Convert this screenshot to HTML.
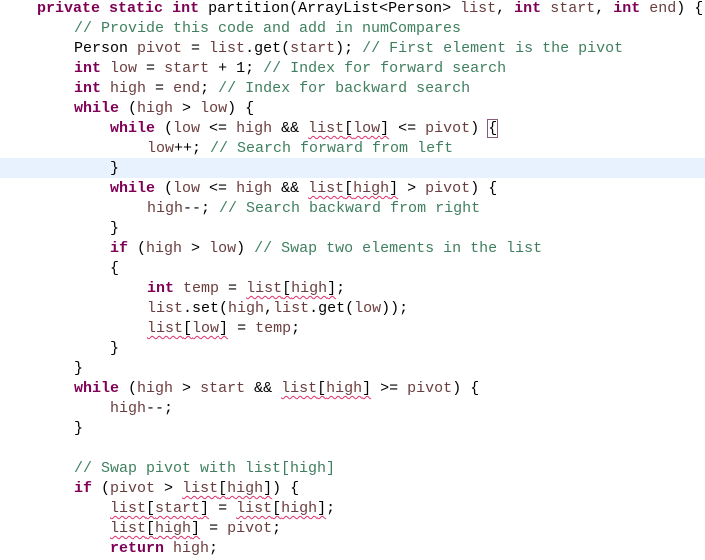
<!DOCTYPE html>
<html><head><style>
body{margin:0;width:705px;height:560px;background:#fff;overflow:hidden;position:relative;font-family:"Liberation Mono",monospace;font-size:15px;color:#000}
.l{position:absolute;white-space:pre;height:20px;line-height:20px}
.k{color:#7f0055;font-weight:bold}
.v{color:#6a3e3e}
.c{color:#3f7f5f}
.e{text-decoration:underline wavy #e0306a;text-decoration-thickness:1px;text-underline-offset:3px}
.hl{position:absolute;left:0;width:705px;top:158px;height:20px;background:#e8f2fe}
.b{outline:1px solid #8a5c7a}
</style></head><body>
<div class="hl"></div>
<div class="l" style="left:37px;top:-1px"><span class="k">private</span> <span class="k">static</span> <span class="k">int</span> partition(ArrayList&lt;Person&gt; <span class="v">list</span>, <span class="k">int</span> <span class="v">start</span>, <span class="k">int</span> <span class="v">end</span>) {</div>
<div class="l" style="left:74px;top:19px"><span class="c">// Provide this code and add in numCompares</span></div>
<div class="l" style="left:74px;top:39px">Person <span class="v">pivot</span> = <span class="v">list</span>.get(<span class="v">start</span>); <span class="c">// First element is the pivot</span></div>
<div class="l" style="left:74px;top:59px"><span class="k">int</span> <span class="v">low</span> = <span class="v">start</span> + 1; <span class="c">// Index for forward search</span></div>
<div class="l" style="left:74px;top:79px"><span class="k">int</span> <span class="v">high</span> = <span class="v">end</span>; <span class="c">// Index for backward search</span></div>
<div class="l" style="left:74px;top:99px"><span class="k">while</span> (<span class="v">high</span> &gt; <span class="v">low</span>) {</div>
<div class="l" style="left:110px;top:119px"><span class="k">while</span> (<span class="v">low</span> &lt;= <span class="v">high</span> &amp;&amp; <span class="e"><span class="v">list</span>[<span class="v">low</span>]</span> &lt;= <span class="v">pivot</span>) <span class="b">{</span></div>
<div class="l" style="left:147px;top:139px"><span class="v">low</span>++; <span class="c">// Search forward from left</span></div>
<div class="l" style="left:110px;top:159px">}</div>
<div class="l" style="left:110px;top:179px"><span class="k">while</span> (<span class="v">low</span> &lt;= <span class="v">high</span> &amp;&amp; <span class="e"><span class="v">list</span>[<span class="v">high</span>]</span> &gt; <span class="v">pivot</span>) {</div>
<div class="l" style="left:147px;top:199px"><span class="v">high</span>--; <span class="c">// Search backward from right</span></div>
<div class="l" style="left:110px;top:219px">}</div>
<div class="l" style="left:110px;top:239px"><span class="k">if</span> (<span class="v">high</span> &gt; <span class="v">low</span>) <span class="c">// Swap two elements in the list</span></div>
<div class="l" style="left:110px;top:259px">{</div>
<div class="l" style="left:147px;top:279px"><span class="k">int</span> <span class="v">temp</span> = <span class="e"><span class="v">list</span>[<span class="v">high</span>]</span>;</div>
<div class="l" style="left:147px;top:299px"><span class="v">list</span>.set(<span class="v">high</span>,<span class="v">list</span>.get(<span class="v">low</span>));</div>
<div class="l" style="left:147px;top:319px"><span class="e"><span class="v">list</span>[<span class="v">low</span>]</span> = <span class="v">temp</span>;</div>
<div class="l" style="left:110px;top:339px">}</div>
<div class="l" style="left:74px;top:359px">}</div>
<div class="l" style="left:74px;top:379px"><span class="k">while</span> (<span class="v">high</span> &gt; <span class="v">start</span> &amp;&amp; <span class="e"><span class="v">list</span>[<span class="v">high</span>]</span> &gt;= <span class="v">pivot</span>) {</div>
<div class="l" style="left:110px;top:399px"><span class="v">high</span>--;</div>
<div class="l" style="left:74px;top:419px">}</div>
<div class="l" style="left:74px;top:459px"><span class="c">// Swap pivot with list[high]</span></div>
<div class="l" style="left:74px;top:479px"><span class="k">if</span> (<span class="v">pivot</span> &gt; <span class="e"><span class="v">list</span>[<span class="v">high</span>]</span>) {</div>
<div class="l" style="left:110px;top:499px"><span class="e"><span class="v">list</span>[<span class="v">start</span>]</span> = <span class="e"><span class="v">list</span>[<span class="v">high</span>]</span>;</div>
<div class="l" style="left:110px;top:519px"><span class="e"><span class="v">list</span>[<span class="v">high</span>]</span> = <span class="v">pivot</span>;</div>
<div class="l" style="left:110px;top:539px"><span class="k">return</span> <span class="v">high</span>;</div>
</body></html>
